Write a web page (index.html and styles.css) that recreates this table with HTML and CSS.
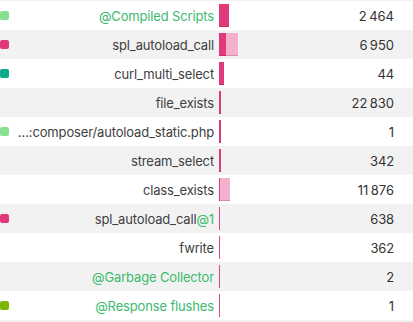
FILE: index.html
```html
<!DOCTYPE html>
<html>
<head>
<meta charset="utf-8">
<link rel="stylesheet" href="styles.css">
</head>
<body>
<div class="list">
  <div class="row edge"></div>
  <div class="row"><span class="dot c-lgreen"></span><span class="name green">@Compiled Scripts</span><span class="bar"><span class="dark" style="width:10px"></span></span><span class="num">2&#8239;464</span></div>
  <div class="row alt"><span class="dot c-pink"></span><span class="name">spl_autoload_call</span><span class="bar"><span class="dark" style="width:7px"></span><span class="light" style="width:12px"></span></span><span class="num">6&#8239;950</span></div>
  <div class="row"><span class="dot c-teal"></span><span class="name">curl_multi_select</span><span class="bar"><span class="dark" style="width:5px"></span></span><span class="num">44</span></div>
  <div class="row alt"><span class="dot"></span><span class="name">file_exists</span><span class="bar"><span class="dark" style="width:2px"></span></span><span class="num">22&#8239;830</span></div>
  <div class="row"><span class="dot c-lgreen"></span><span class="name">…:composer/autoload_static.php</span><span class="bar"><span class="dark" style="width:2px"></span></span><span class="num">1</span></div>
  <div class="row alt"><span class="dot"></span><span class="name">stream_select</span><span class="bar"><span class="dark" style="width:2px"></span></span><span class="num">342</span></div>
  <div class="row"><span class="dot"></span><span class="name">class_exists</span><span class="bar"><span class="dark" style="width:1px"></span><span class="light" style="width:10px"></span></span><span class="num">11&#8239;876</span></div>
  <div class="row alt"><span class="dot c-pink"></span><span class="name">spl_autoload_call<span class="green">@1</span></span><span class="bar"><span class="thin"></span></span><span class="num">638</span></div>
  <div class="row"><span class="dot"></span><span class="name">fwrite</span><span class="bar"><span class="thin"></span></span><span class="num">362</span></div>
  <div class="row alt"><span class="dot"></span><span class="name green">@Garbage Collector</span><span class="bar"><span class="thin"></span></span><span class="num">2</span></div>
  <div class="row"><span class="dot c-olive"></span><span class="name green">@Response flushes</span><span class="bar"><span class="thin"></span></span><span class="num">1</span></div>
  <div class="row alt edge2"></div>
</div>
</body>
</html>
```
FILE: styles.css
```css
html, body {
  margin: 0;
  padding: 0;
  background: #ffffff;
}
body {
  font-family: Inter, "Noto Sans", sans-serif;
  font-size: 13px;
  letter-spacing: -0.15px;
  color: #404040;
  overflow: hidden;
}
.list {
  display: flex;
  flex-direction: column;
}
.row {
  display: flex;
  align-items: center;
  height: 29px;
  background: #ffffff;
}
.row.alt, .row.edge {
  background: #f2f2f2;
}
.row.edge {
  height: 1px;
}
.row.edge2 {
  height: 2px;
}
.dot {
  flex: 0 0 9px;
  height: 9px;
  border-radius: 2px;
}
.c-lgreen { background: #86e08f; }
.c-pink { background: #e0397b; }
.c-teal { background: #0daa8a; }
.c-olive { background: #7db600; }
.name {
  flex: 0 0 205px;
  text-align: right;
  white-space: nowrap;
  overflow: hidden;
}
.green { color: #3cba6e; }
.bar {
  flex: 0 0 auto;
  width: 60px;
  margin-left: 5px;
  height: 23px;
  display: flex;
}
.dark {
  background: #de3a7c;
  box-shadow: inset 0 -1px 0 #c42f6a;
}
.light {
  background: #f3b1cd;
  box-shadow: inset 0 -1px 0 #d88fae;
}
.thin {
  width: 1px;
  background: #d9487f;
}
.num {
  flex: 1 1 auto;
  text-align: right;
  padding-right: 19px;
  color: #333333;
}
```
